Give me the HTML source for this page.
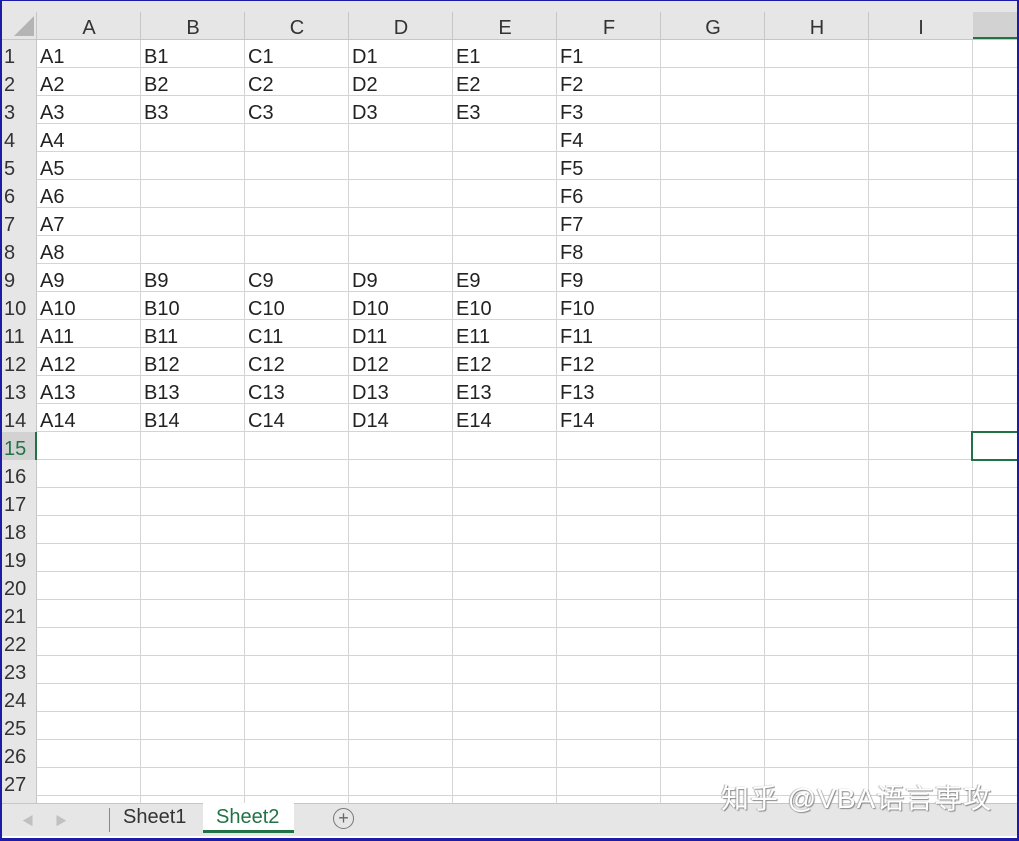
<!DOCTYPE html>
<html><head><meta charset="utf-8"><style>
body{margin:0;width:1019px;height:841px;overflow:hidden;background:#fff;font-family:"Liberation Sans","Noto Sans CJK SC",sans-serif;position:relative}
.frame{position:absolute;left:0;top:0;width:1015px;height:837px;border:2px solid #1c1ca8;border-width:1px 2px 3px 2px}
.hdr{position:absolute;left:2px;top:1px;width:1015px;height:38px;background:#e6e6e6;border-bottom:1px solid #c6c6c6}
.rh{position:absolute;left:2px;top:40px;width:34px;height:763px;background:#e6e6e6;border-right:1px solid #c6c6c6}
.grid{position:absolute;left:36px;top:39px;width:981px;height:764px;
background-image:repeating-linear-gradient(to right,#d4d4d4 0 1px,transparent 1px 104px),repeating-linear-gradient(to bottom,#d4d4d4 0 1px,transparent 1px 28px)}
.ch{position:absolute;top:15px;font-size:20px;color:#333;width:104px;text-align:center;line-height:26px}
.cvl{position:absolute;top:12px;height:27px;width:1px;background:#c6c6c6}
.rn{position:absolute;left:4px;font-size:20px;color:#333;line-height:28px}
.col{position:absolute;top:43px;line-height:28px;font-size:20px;color:#222}
.tabs{position:absolute;left:2px;top:803px;width:1015px;height:32px;background:#e6e6e6;border-top:1px solid #c6c6c6}
</style></head><body>
<div class="grid"></div>
<div class="hdr"></div>
<div class="rh"></div>
<div style="position:absolute;left:14px;top:16px;width:0;height:0;border-left:20px solid transparent;border-bottom:20px solid #b4b4b4"></div>
<div class="cvl" style="left:36px"></div><div class="cvl" style="left:140px"></div><div class="cvl" style="left:244px"></div><div class="cvl" style="left:348px"></div><div class="cvl" style="left:452px"></div><div class="cvl" style="left:556px"></div><div class="cvl" style="left:660px"></div><div class="cvl" style="left:764px"></div><div class="cvl" style="left:868px"></div>
<div style="position:absolute;left:973px;top:12px;width:44px;height:25px;background:#d2d2d2;border-bottom:2px solid #217346"></div>
<div class="ch" style="left:37px">A</div><div class="ch" style="left:141px">B</div><div class="ch" style="left:245px">C</div><div class="ch" style="left:349px">D</div><div class="ch" style="left:453px">E</div><div class="ch" style="left:557px">F</div><div class="ch" style="left:661px">G</div><div class="ch" style="left:765px">H</div><div class="ch" style="left:869px">I</div>
<div style="position:absolute;left:2px;top:432px;width:33px;height:28px;background:#d2d2d2;border-right:2px solid #217346"></div>
<div class="rn" style="top:43px">1</div><div class="rn" style="top:71px">2</div><div class="rn" style="top:99px">3</div><div class="rn" style="top:127px">4</div><div class="rn" style="top:155px">5</div><div class="rn" style="top:183px">6</div><div class="rn" style="top:211px">7</div><div class="rn" style="top:239px">8</div><div class="rn" style="top:267px">9</div><div class="rn" style="top:295px">10</div><div class="rn" style="top:323px">11</div><div class="rn" style="top:351px">12</div><div class="rn" style="top:379px">13</div><div class="rn" style="top:407px">14</div><div class="rn" style="top:435px;color:#217346">15</div><div class="rn" style="top:463px">16</div><div class="rn" style="top:491px">17</div><div class="rn" style="top:519px">18</div><div class="rn" style="top:547px">19</div><div class="rn" style="top:575px">20</div><div class="rn" style="top:603px">21</div><div class="rn" style="top:631px">22</div><div class="rn" style="top:659px">23</div><div class="rn" style="top:687px">24</div><div class="rn" style="top:715px">25</div><div class="rn" style="top:743px">26</div><div class="rn" style="top:771px">27</div>
<div class="col" style="left:40px">A1<br>A2<br>A3<br>A4<br>A5<br>A6<br>A7<br>A8<br>A9<br>A10<br>A11<br>A12<br>A13<br>A14</div>
<div class="col" style="left:144px">B1<br>B2<br>B3<br><br><br><br><br><br>B9<br>B10<br>B11<br>B12<br>B13<br>B14</div>
<div class="col" style="left:248px">C1<br>C2<br>C3<br><br><br><br><br><br>C9<br>C10<br>C11<br>C12<br>C13<br>C14</div>
<div class="col" style="left:352px">D1<br>D2<br>D3<br><br><br><br><br><br>D9<br>D10<br>D11<br>D12<br>D13<br>D14</div>
<div class="col" style="left:456px">E1<br>E2<br>E3<br><br><br><br><br><br>E9<br>E10<br>E11<br>E12<br>E13<br>E14</div>
<div class="col" style="left:560px">F1<br>F2<br>F3<br>F4<br>F5<br>F6<br>F7<br>F8<br>F9<br>F10<br>F11<br>F12<br>F13<br>F14</div>
<div style="position:absolute;left:971px;top:431px;width:46px;height:26px;border:2px solid #217346;border-right:none"></div>
<div class="tabs"></div>
<div style="position:absolute;left:22px;top:812px;color:#c0c0c0;font-size:12px">◀</div>
<div style="position:absolute;left:55px;top:812px;color:#c0c0c0;font-size:12px">▶</div>
<div style="position:absolute;left:109px;top:808px;width:1px;height:24px;background:#888"></div>
<div style="position:absolute;left:123px;top:804px;font-size:20px;color:#333;line-height:26px">Sheet1</div>
<div style="position:absolute;left:203px;top:803px;width:91px;height:27px;background:#fff;border-bottom:3px solid #217346"></div>
<div style="position:absolute;left:216px;top:804px;font-size:20px;color:#217346;line-height:26px">Sheet2</div>
<div style="position:absolute;left:333px;top:808px;width:19px;height:19px;border:1px solid #777;border-radius:50%;text-align:center;line-height:19px;font-size:18px;color:#666">+</div>
<div style="position:absolute;left:721px;top:782px;font-size:28px;color:#fff;line-height:34px;text-shadow:1px 1px 1px #888,-1px 0 1px #aaa;letter-spacing:1px">知乎 @VBA语言専攻</div>
<div class="frame"></div>
</body></html>
